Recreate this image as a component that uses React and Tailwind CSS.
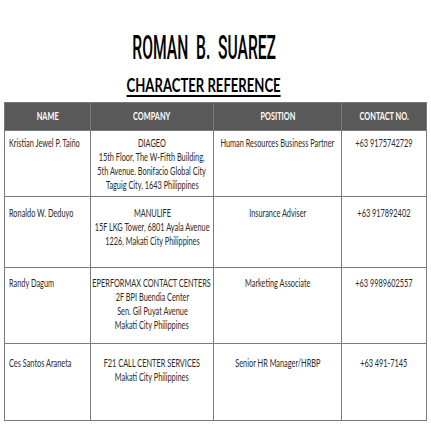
const COLUMNS = [
  { label: 'NAME', width: 'w-[86px]' },
  { label: 'COMPANY', width: 'w-[123px]' },
  { label: 'POSITION', width: 'w-[128px]' },
  { label: 'CONTACT NO.', width: 'w-[85px]' },
];

const REFERENCES = [
  {
    name: 'Kristian Jewel P. Taiño',
    company: ['DIAGEO', '15th Floor, The W-Fifth Building,', '5th Avenue. Bonifacio Global City', 'Taguig City, 1643 Philippines'],
    position: 'Human Resources Business Partner',
    contact: '+63 9175742729',
    height: 'h-[66px]',
    pad: 'pt-[5px]',
  },
  {
    name: 'Ronaldo W. Deduyo',
    company: ['MANULIFE', '15F LKG Tower, 6801 Ayala Avenue', '1226, Makati City Philippines'],
    position: 'Insurance Adviser',
    contact: '+63 917892402',
    height: 'h-[71px]',
    pad: 'pt-[9px]',
  },
  {
    name: 'Randy Dagum',
    company: ['EPERFORMAX CONTACT CENTERS', '2F BPI Buendia Center', 'Sen. Gil Puyat Avenue', 'Makati City Philippines'],
    position: 'Marketing Associate',
    contact: '+63 9989602557',
    height: 'h-[76px]',
    pad: 'pt-[8px]',
  },
  {
    name: 'Ces Santos Araneta',
    company: ['F21 CALL CENTER SERVICES', 'Makati City Philippines'],
    position: 'Senior HR Manager/HRBP',
    contact: '+63 491-7145',
    height: 'h-[77px]',
    pad: 'pt-[12px]',
  },
];

const cell = 'border border-[#7a7a7a] align-top text-[10.5px] leading-[14px] text-[#2a2a2a]';

function Line({ children, left }) {
  return (
    <div className={`flex ${left ? 'justify-start' : 'justify-center'}`}>
      <span className={`shrink-0 whitespace-nowrap scale-x-[0.7] ${left ? 'origin-left' : 'origin-center'}`}>
        {children}
      </span>
    </div>
  );
}

export default function App() {
  return (
    <div className="h-[431px] w-[431px] bg-white font-['Lato',sans-serif]">
      <div className="flex flex-col items-center pr-[23px] pt-[29px]">
        <h1 className="inline-block scale-x-[0.46] whitespace-nowrap font-['Roboto',sans-serif] text-[34px] font-medium leading-[36px] text-black">
          ROMAN&nbsp;&nbsp;B.&nbsp;&nbsp;SUAREZ
        </h1>
        <h2 className="mt-[9px] inline-block scale-x-[0.69] whitespace-nowrap text-[19px] font-bold leading-[22px] text-black underline decoration-2 underline-offset-[3px]">
          CHARACTER REFERENCE
        </h2>
      </div>

      <table className="mx-[4px] mt-[6px] w-[422px] table-fixed border-collapse">
        <thead>
          <tr className="h-[28px] bg-[#595959]">
            {COLUMNS.map((col) => (
              <th
                key={col.label}
                className={`${col.width} border border-[#7a7a7a] align-middle text-[10.5px] font-bold text-white`}
              >
                <Line>{col.label}</Line>
              </th>
            ))}
          </tr>
        </thead>
        <tbody>
          {REFERENCES.map((ref) => (
            <tr key={ref.name} className={ref.height}>
              <td className={`${cell} ${ref.pad} pl-[4px]`}>
                <Line left>{ref.name}</Line>
              </td>
              <td className={`${cell} ${ref.pad}`}>
                {ref.company.map((line) => (
                  <Line key={line}>{line}</Line>
                ))}
              </td>
              <td className={`${cell} ${ref.pad}`}>
                <Line>{ref.position}</Line>
              </td>
              <td className={`${cell} ${ref.pad}`}>
                <Line>{ref.contact}</Line>
              </td>
            </tr>
          ))}
        </tbody>
      </table>
    </div>
  );
}
